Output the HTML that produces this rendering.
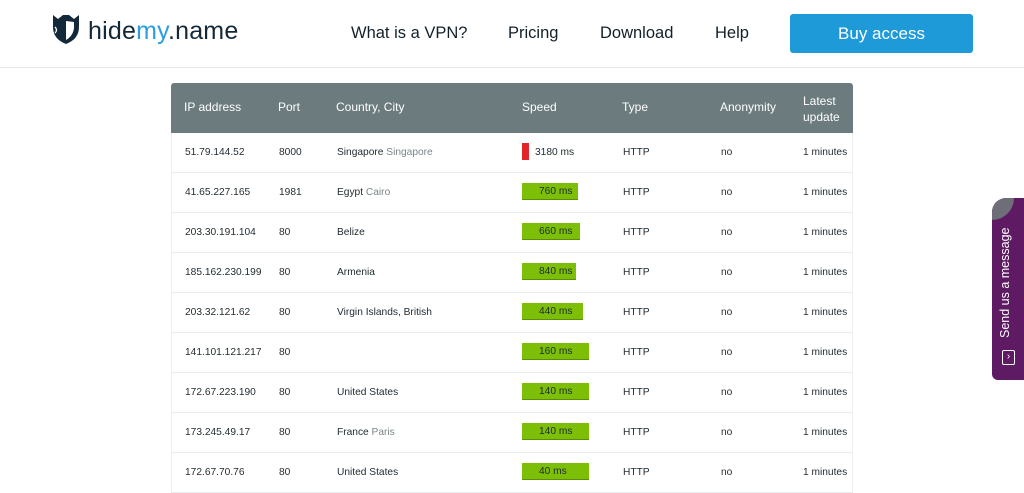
<!DOCTYPE html>
<html><head><meta charset="utf-8"><style>
*{margin:0;padding:0;box-sizing:border-box}
body{width:1024px;height:493px;overflow:hidden;background:#fff;font-family:"Liberation Sans",sans-serif;position:relative;color:#1f2a30}
.hdr{position:absolute;left:0;top:0;width:1024px;height:68px;border-bottom:1px solid #e6e8e9}
.logo{position:absolute;left:88px;top:17px;font-size:25px;color:#13293a;letter-spacing:0.2px}
.logo span{color:#2a9ee0}
.nav{position:absolute;top:24px;font-size:16.5px;color:#13202a}
.btn{position:absolute;left:790px;top:14px;width:183px;height:39px;background:#1f9ad9;border-radius:3px;color:#fff;font-size:17px;text-align:center;line-height:39px}
.tbl{position:absolute;left:171px;top:83px;width:682px}
.th{height:50px;background:#6b7b7e;border-radius:3px 3px 0 0;position:relative;color:#fff;font-size:12px}
.th div{position:absolute;top:17px}
.row{height:40px;border-bottom:1px solid #e8eaeb;border-left:1px solid #eceeef;border-right:1px solid #eceeef;position:relative;font-size:10.2px;color:#1f2a30}
.row div{position:absolute;top:14px}
.c1{left:13px}.c2{left:107px}.c3{left:165px}.c5{left:451px}.c6{left:549px}.c7{left:631px}
.city{color:#7b8589}
.row .bar{left:350px;top:10px;height:17px;background:#7cbf06;border-bottom:1px solid #5a9000;line-height:18px;padding-left:17px}
.row .red{left:350px;top:10px;width:7px;height:17px;background:#e0262a}
.wid{position:absolute;left:992px;top:198px;width:40px;height:182px;background:#5e1a63;border-radius:14px 0 0 6px;overflow:hidden}
.wid .cor{position:absolute;left:0;top:0;width:22px;height:22px;background:#6d6e78;border-radius:14px 0 22px 0}
.wid .t{position:absolute;left:6px;top:140px;transform-origin:0 0;transform:rotate(-90deg);color:#fff;font-size:12.5px;white-space:nowrap}
.wid .ic{position:absolute;left:10px;top:152px;width:13px;height:15px;border:1.5px solid #fff;border-radius:2px;color:#fff;font-size:10px;line-height:11px;text-align:center}
</style></head><body>
<div class="hdr">
<svg style="position:absolute;left:51px;top:13px" width="30" height="32" viewBox="0 0 30 32"><path d="M2 2 L7 6 L12 2 L18 2 L23 6 L28 2 L28 14 Q28 26 15 31 Q2 26 2 14 Z" fill="#13293a"/><path d="M15 8 L15 27 Q22 23 23 15 L23 9 Z" fill="#fff"/><path d="M4 14 Q7 17 4 20" stroke="#fff" stroke-width="1.3" fill="none"/></svg>
<div class="logo">hide<span>my</span>.name</div>
<div class="nav" style="left:351px">What is a VPN?</div>
<div class="nav" style="left:508px">Pricing</div>
<div class="nav" style="left:600px">Download</div>
<div class="nav" style="left:715px">Help</div>
<div class="btn">Buy access</div>
</div>
<div class="tbl">
<div class="th"><div class="c1">IP address</div><div class="c2">Port</div><div class="c3">Country, City</div><div style="left:351px">Speed</div><div class="c5">Type</div><div class="c6">Anonymity</div><div style="left:632px;top:10px;line-height:16px">Latest<br>update</div></div>
<div class="row"><div class="c1">51.79.144.52</div><div class="c2">8000</div><div class="c3">Singapore <span class="city">Singapore</span></div><div class="red"></div><div style="left:363px">3180 ms</div><div class="c5">HTTP</div><div class="c6">no</div><div class="c7">1 minutes</div></div>
<div class="row"><div class="c1">41.65.227.165</div><div class="c2">1981</div><div class="c3">Egypt <span class="city">Cairo</span></div><div class="bar" style="width:56px">760 ms</div><div class="c5">HTTP</div><div class="c6">no</div><div class="c7">1 minutes</div></div>
<div class="row"><div class="c1">203.30.191.104</div><div class="c2">80</div><div class="c3">Belize</div><div class="bar" style="width:58px">660 ms</div><div class="c5">HTTP</div><div class="c6">no</div><div class="c7">1 minutes</div></div>
<div class="row"><div class="c1">185.162.230.199</div><div class="c2">80</div><div class="c3">Armenia</div><div class="bar" style="width:54px">840 ms</div><div class="c5">HTTP</div><div class="c6">no</div><div class="c7">1 minutes</div></div>
<div class="row"><div class="c1">203.32.121.62</div><div class="c2">80</div><div class="c3">Virgin Islands, British</div><div class="bar" style="width:61px">440 ms</div><div class="c5">HTTP</div><div class="c6">no</div><div class="c7">1 minutes</div></div>
<div class="row"><div class="c1">141.101.121.217</div><div class="c2">80</div><div class="bar" style="width:67px">160 ms</div><div class="c5">HTTP</div><div class="c6">no</div><div class="c7">1 minutes</div></div>
<div class="row"><div class="c1">172.67.223.190</div><div class="c2">80</div><div class="c3">United States</div><div class="bar" style="width:67px">140 ms</div><div class="c5">HTTP</div><div class="c6">no</div><div class="c7">1 minutes</div></div>
<div class="row"><div class="c1">173.245.49.17</div><div class="c2">80</div><div class="c3">France <span class="city">Paris</span></div><div class="bar" style="width:67px">140 ms</div><div class="c5">HTTP</div><div class="c6">no</div><div class="c7">1 minutes</div></div>
<div class="row"><div class="c1">172.67.70.76</div><div class="c2">80</div><div class="c3">United States</div><div class="bar" style="width:67px">40 ms</div><div class="c5">HTTP</div><div class="c6">no</div><div class="c7">1 minutes</div></div>
</div>
<div class="wid"><div class="cor"></div><div class="t">Send us a message</div><div class="ic">›</div></div>
</body></html>
